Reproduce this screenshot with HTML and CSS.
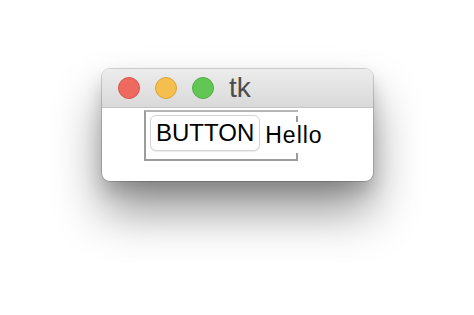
FILE: index.html
```html
<!DOCTYPE html>
<html>
<head>
<meta charset="utf-8">
<link rel="stylesheet" href="styles.css">
</head>
<body>
<div class="stage">
  <div class="window">
    <div class="titlebar">
      <span class="light red"></span>
      <span class="light yellow"></span>
      <span class="light green"></span>
      <span class="title">tk</span>
    </div>
    <div class="content">
      <div class="frame">
        <div class="button">BUTTON</div>
        <div class="label">Hello</div>
      </div>
    </div>
  </div>
</div>
</body>
</html>
```

FILE: styles.css
```css
html, body {
  margin: 0;
  padding: 0;
  background: #ffffff;
}
.stage {
  width: 474px;
  height: 315px;
  box-sizing: border-box;
  padding: 69px 0 0 102px;
  display: flex;
  align-items: flex-start;
  font-family: "Liberation Sans", Arial, sans-serif;
}
.window {
  width: 271px;
  height: 112px;
  border-radius: 8px;
  overflow: hidden;
  background: #ffffff;
  box-shadow: 0 0 0 1px rgba(0,0,0,0.16), 0 30px 48px rgba(0,0,0,0.42), 0 10px 18px rgba(0,0,0,0.16);
  display: flex;
  flex-direction: column;
}
.titlebar {
  height: 38px;
  flex: none;
  background: linear-gradient(#ececec, #d9d9d9);
  border-bottom: 1px solid #c4c4c4;
  display: flex;
  align-items: center;
  padding-left: 16px;
  gap: 15px;
}
.light {
  width: 22px;
  height: 22px;
  border-radius: 50%;
  box-sizing: border-box;
  flex: none;
}
.red { background: #ee6a5e; border: 1px solid #d8544a; }
.yellow { background: #f5bf4f; border: 1px solid #dca33b; }
.green { background: #62c655; border: 1px solid #4fae43; }
.title {
  font-family: "Liberation Sans", Arial, sans-serif;
  font-size: 28px;
  color: #4d4d4d;
  margin-left: 0px;
  margin-top: -1px;
}
.content {
  flex: 1;
  padding: 2px 0 0 42px;
  display: flex;
  align-items: flex-start;
}
.frame {
  position: relative;
  width: 154px;
  height: 51px;
  border-left: 2px solid #9c9c9c;
  border-top: 2px solid #b5b5b5;
  border-bottom: 2px solid #9c9c9c;
  display: flex;
  align-items: flex-start;
  padding: 3px 0 0 4px;
  box-sizing: border-box;
}
.frame::before,
.frame::after {
  content: "";
  position: absolute;
  right: 0;
  width: 2px;
  height: 6px;
  background: #9c9c9c;
}
.frame::before { top: 4px; }
.frame::after { bottom: 0; }
.button {
  flex: none;
  height: 36px;
  box-sizing: border-box;
  padding: 0 5px;
  border: 1px solid #d4d4d4;
  border-radius: 6px;
  background: #ffffff;
  box-shadow: 0 1px 1px rgba(0,0,0,0.08);
  display: flex;
  align-items: center;
  font-size: 24px;
  color: #000000;
}
.label {
  flex: none;
  font-size: 23px;
  letter-spacing: 1px;
  color: #000000;
  margin: 7px 0 0 5px;
}
```
